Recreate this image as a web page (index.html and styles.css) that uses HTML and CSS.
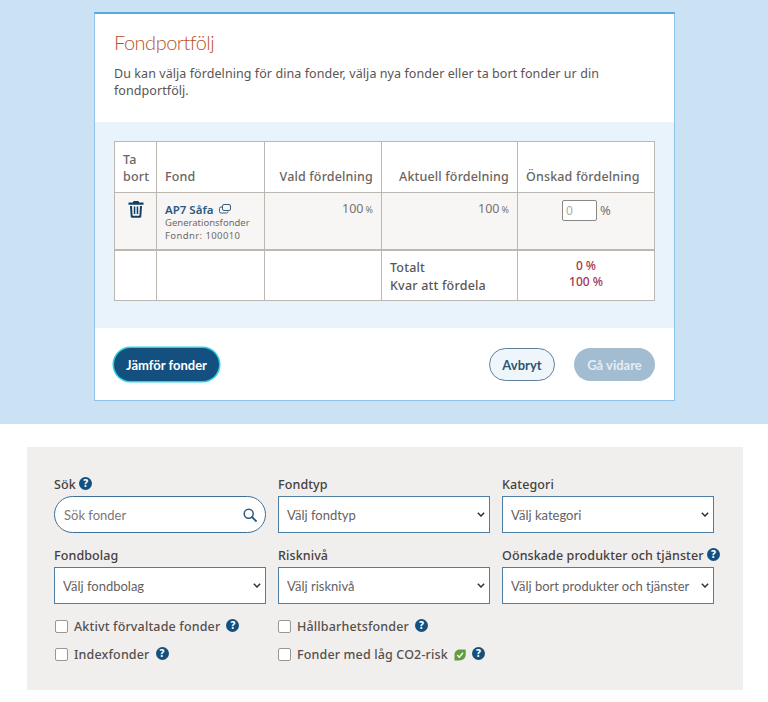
FILE: index.html
```html
<!DOCTYPE html>
<html lang="sv">
<head>
    <meta charset="UTF-8">
    <meta name="viewport" content="width=device-width, initial-scale=1.0">
    <title>Fondportfölj</title>
    <link rel="stylesheet" href="styles.css">
</head>
<body>

    <!-- Modal on blue backdrop -->
    <section class="backdrop">
        <div class="modal">
            <div class="modal-header">
                <h1>Fondportfölj</h1>
                <p>Du kan välja fördelning för dina fonder, välja nya fonder eller ta bort fonder ur din fondportfölj.</p>
            </div>

            <div class="modal-body">
                <table class="fund-table">
                    <colgroup>
                        <col class="col-remove">
                        <col class="col-fund">
                        <col class="col-chosen">
                        <col class="col-current">
                        <col class="col-wanted">
                    </colgroup>
                    <thead>
                        <tr>
                            <th>Ta<br>bort</th>
                            <th>Fond</th>
                            <th class="num">Vald fördelning</th>
                            <th class="num">Aktuell fördelning</th>
                            <th>Önskad fördelning</th>
                        </tr>
                    </thead>
                    <tbody>
                        <tr class="fund-row">
                            <td class="trash-cell">
                                <svg class="trash" viewBox="0 0 16 18" width="16" height="18" aria-hidden="true">
                                    <path d="M5.500 1h5l.7 1.500H15.500v2.200H.5V2.500h4.300z" fill="#123f63"/>
                                    <path d="M2 6l.7 10.500c0 .7.500 1.200 1.100 1.200h8.400c.6 0 1.100-.5 1.100-1.200L14 6h-2l-.6 9.700H4.600L4 6z" fill="#123f63"/>
                                    <path d="M5.800 6.500h1.500v7.500H5.800zM8.700 6.500h1.500v7.500H8.700z" fill="#123f63"/>
                                </svg>
                            </td>
                            <td>
                                <a class="fund-name" href="#">AP7 Såfa
                                    <svg class="ext" viewBox="0 0 12 10" width="12" height="10" aria-hidden="true">
                                        <rect x="3.500" y="0.500" width="8" height="6" rx="1.500" fill="none" stroke="#3a5f7d"/>
                                        <path d="M3 3H2A1.500 1.500 0 0 0 .5 4.500v3A1.500 1.500 0 0 0 2 9h5.500A1.500 1.500 0 0 0 9 7.500" fill="none" stroke="#3a5f7d"/>
                                    </svg>
                                </a>
                                <div class="fund-meta">Generationsfonder</div>
                                <div class="fund-meta fund-nr">Fondnr: 100010</div>
                            </td>
                            <td class="num amount">100<span class="unit">%</span></td>
                            <td class="num amount">100<span class="unit">%</span></td>
                            <td class="wanted">
                                <input class="wanted-input" type="text" placeholder="0"><span class="wanted-unit">%</span>
                            </td>
                        </tr>
                        <tr class="total-row">
                            <td></td>
                            <td></td>
                            <td></td>
                            <td class="total-label">Totalt<br>Kvar att fördela</td>
                            <td class="total-value">0 %<br>100 %</td>
                        </tr>
                    </tbody>
                </table>
            </div>

            <div class="modal-footer">
                <button class="btn btn-primary" type="button">Jämför fonder</button>
                <div class="footer-right">
                    <button class="btn btn-outline" type="button">Avbryt</button>
                    <button class="btn btn-disabled" type="button">Gå vidare</button>
                </div>
            </div>
        </div>
    </section>

    <!-- Filter panel -->
    <section class="filters">
        <div class="filter-grid">
            <div class="field">
                <label>Sök <span class="help">?</span></label>
                <div class="search">
                    <input type="text" placeholder="Sök fonder">
                    <svg viewBox="0 0 14 14" width="14" height="14" aria-hidden="true">
                        <circle cx="5.700" cy="5.700" r="4.500" fill="none" stroke="#2d5a7e" stroke-width="1.500"/>
                        <path d="M9 9l4 4" stroke="#2d5a7e" stroke-width="1.800" stroke-linecap="round"/>
                    </svg>
                </div>
            </div>
            <div class="field">
                <label>Fondtyp</label>
                <select><option>Välj fondtyp</option></select>
            </div>
            <div class="field">
                <label>Kategori</label>
                <select><option>Välj kategori</option></select>
            </div>
            <div class="field">
                <label>Fondbolag</label>
                <select><option>Välj fondbolag</option></select>
            </div>
            <div class="field">
                <label>Risknivå</label>
                <select><option>Välj risknivå</option></select>
            </div>
            <div class="field">
                <label>Oönskade produkter och tjänster <span class="help">?</span></label>
                <select><option>Välj bort produkter och tjänster</option></select>
            </div>
        </div>

        <div class="check-grid">
            <label class="check"><span class="box"></span>Aktivt förvaltade fonder <span class="help">?</span></label>
            <label class="check"><span class="box"></span>Hållbarhetsfonder <span class="help">?</span></label>
            <label class="check"><span class="box"></span>Indexfonder <span class="help">?</span></label>
            <label class="check"><span class="box"></span>Fonder med låg CO2-risk
                <svg class="leaf" viewBox="0 0 12 12" width="12" height="12" aria-hidden="true">
                    <path d="M11.500 .5C12 3 12 7 11 8.500 9.800 10.800 7.500 11.500 4.500 11.500H.5V5.500C.5 2.500 3 .5 6 .5z" fill="#5f9e3a"/>
                    <path d="M3.200 6l2.100 2.200 3.700-4.400" fill="none" stroke="#fff" stroke-width="1.400"/>
                </svg>
                <span class="help">?</span></label>
        </div>
    </section>

</body>
</html>
```

FILE: styles.css
```css
/* Basic Reset */
* {
    margin: 0;
    padding: 0;
    box-sizing: border-box;
}

body {
    font-family: 'Noto Sans', sans-serif;
    background: #fff;
    color: #5a5553;
    height: 702px;
    overflow: hidden;
}

/* Backdrop and modal */
.backdrop {
    background: #cbe2f5;
    height: 424px;
    padding: 12px 93px 0 94px;
}

.modal {
    background: #fff;
    border: 1px solid #8fc3e8;
    border-top: 2px solid #5aa9dc;
    height: 389px;
    display: flex;
    flex-direction: column;
}

.modal-header {
    height: 108px;
    padding: 13px 19px 0;
}

.modal-header h1 {
    color: #b9502a;
    font-family: 'Lato', sans-serif;
    font-size: 20px;
    font-weight: 300;
    letter-spacing: -0.5px;
    line-height: 30px;
    margin-bottom: 8px;
}

.modal-header p {
    font-size: 12.5px;
    line-height: 17px;
    letter-spacing: 0.07px;
}

.modal-body {
    background: #e8f3fb;
    height: 206px;
    padding: 19px 19px 0;
}

/* Table */
.fund-table {
    width: 540px;
    border-collapse: collapse;
    table-layout: fixed;
    background: #fff;
    font-size: 12.5px;
}

.col-remove { width: 42px; }
.col-fund { width: 108px; }
.col-chosen { width: 117px; }
.col-current { width: 136px; }
.col-wanted { width: 137px; }

.fund-table th,
.fund-table td {
    border: 1px solid #bdb7b2;
}

.fund-table th {
    height: 51px;
    padding: 0 8px 7px;
    text-align: left;
    vertical-align: bottom;
    font-weight: 500;
    line-height: 17px;
    letter-spacing: 0.15px;
    color: #6a6563;
}

.fund-table .num {
    text-align: right;
}

.fund-row td {
    height: 57px;
    background: #f7f6f5;
    vertical-align: top;
    padding: 7px 8px 0;
    border-bottom-width: 2px;
}

.fund-row .trash-cell {
    text-align: center;
    padding: 7px 0 0;
}

.trash {
    display: inline-block;
}

.fund-name {
    display: block;
    color: #2d5a7e;
    font-size: 11.5px;
    font-weight: 600;
    line-height: 17px;
    padding-top: 1px;
    height: 16px;
    text-decoration: none;
}

.ext {
    margin-left: 3px;
}

.fund-meta {
    font-size: 9.5px;
    line-height: 13px;
    color: #6f6a68;
}

.fund-nr {
    letter-spacing: 0.4px;
}

.amount {
    font-size: 12.5px;
    color: #77726f;
}

.unit {
    font-size: 9px;
    margin-left: 2px;
}

.wanted {
    white-space: nowrap;
}

.fund-row .wanted {
    padding: 7px 0 0 44px;
}

.wanted-input {
    width: 35px;
    height: 21px;
    border: 1px solid #8b8784;
    border-radius: 2px;
    padding: 0 3px;
    font: 12px 'Noto Sans', sans-serif;
}

.wanted-input::placeholder {
    color: #aaa;
}

.wanted-unit {
    margin-left: 3px;
    font-size: 13px;
    color: #77726f;
}

.total-row td {
    height: 51px;
}

.total-row .total-label {
    padding: 8px 8px 0;
    font-weight: 500;
    font-size: 12.5px;
    line-height: 18px;
    letter-spacing: 0.2px;
    vertical-align: top;
}

.total-row .total-value {
    text-align: center;
    vertical-align: top;
    padding-top: 7px;
    color: #a3374c;
    font-size: 12px;
    font-weight: 500;
    line-height: 16.500px;
}

/* Footer buttons */
.modal-footer {
    flex: 1;
    padding: 20px 19px 0;
    display: flex;
    justify-content: space-between;
    align-items: flex-start;
}

.footer-right {
    display: flex;
    gap: 19px;
}

.btn {
    height: 33px;
    border-radius: 17px;
    border: none;
    font-family: 'Lato', sans-serif;
    font-size: 13px;
    font-weight: 700;
}

.btn-primary {
    width: 105px;
    background: #14507f;
    color: #fff;
    box-shadow: 0 0 0 1.500px #2bd3e0;
}

.btn-outline {
    width: 66px;
    background: #eef6fc;
    border: 1px solid #5f7f99;
    color: #2f5470;
}

.btn-disabled {
    width: 81px;
    background: #a2bcd2;
    color: #e4edf4;
}

/* Filter panel */
.filters {
    background: #f1efed;
    width: 716px;
    height: 243px;
    margin: 23px 0 0 27px;
    padding: 28px 29px 0 27px;
}

.filter-grid {
    display: grid;
    grid-template-columns: repeat(3, 212px);
    column-gap: 12px;
    row-gap: 13px;
}

.field label {
    display: block;
    height: 21px;
    font-size: 12.5px;
    font-weight: 500;
    line-height: 20px;
    letter-spacing: 0.1px;
    color: #45403e;
    white-space: nowrap;
}

.field select {
    display: block;
    width: 212px;
    height: 37px;
    appearance: none;
    background: #fff url("data:image/svg+xml,%3Csvg xmlns='http://www.w3.org/2000/svg' width='8' height='5'%3E%3Cpath d='M.8.8l3.200 3.200 3.200-3.200' fill='none' stroke='%23333' stroke-width='1.500'/%3E%3C/svg%3E") no-repeat right 4px center;
    border: 1px solid #4d7ea3;
    border-radius: 0;
    padding-left: 8px;
    font-family: 'Lato', sans-serif;
    font-size: 13px;
    color: #66615f;
}

.search {
    height: 37px;
    background: #fff;
    border: 1px solid #3d7199;
    border-radius: 19px;
    display: flex;
    align-items: center;
    padding: 0 8px 0 9px;
}

.search input {
    flex: 1;
    min-width: 0;
    border: none;
    background: transparent;
    font-family: 'Lato', sans-serif;
    font-size: 13px;
}

.search input::placeholder {
    color: #7c7775;
}

.help {
    display: inline-block;
    width: 13px;
    height: 13px;
    border-radius: 50%;
    background: #14507f;
    color: #fff;
    font-size: 10px;
    font-weight: 800;
    line-height: 13px;
    letter-spacing: 0;
    text-align: center;
    vertical-align: 2px;
}

/* Checkboxes */
.check-grid {
    display: grid;
    grid-template-columns: 212px 212px;
    column-gap: 11px;
    margin-top: 13px;
    row-gap: 9px;
}

.check {
    display: flex;
    align-items: center;
    gap: 6px;
    height: 19px;
    font-size: 12.5px;
    font-weight: 500;
    letter-spacing: 0.15px;
    color: #55504e;
    white-space: nowrap;
}

.box {
    width: 13px;
    height: 13px;
    margin-left: 1px;
    background: #fff;
    border: 1px solid #9a9693;
    border-radius: 2px;
}

.check .help {
    margin-bottom: 3px;
}
```
